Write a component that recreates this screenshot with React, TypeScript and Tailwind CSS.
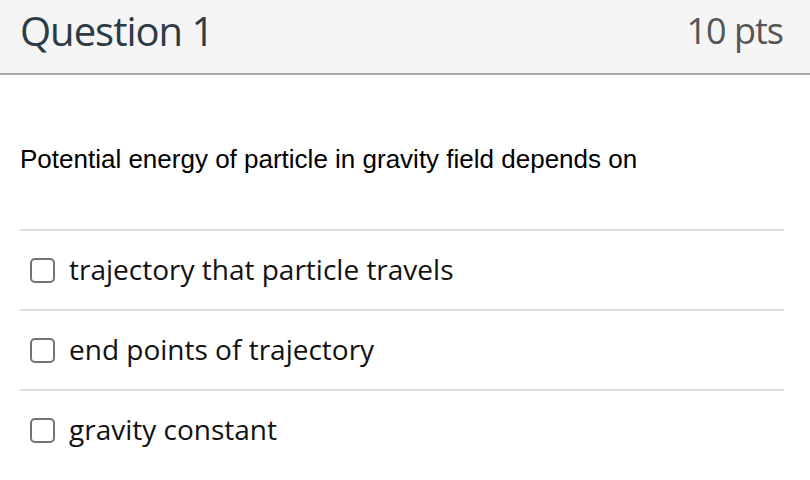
export default function App() {
  const options = [
    "trajectory that particle travels",
    "end points of trajectory",
    "gravity constant",
  ];

  return (
    <div className="w-[810px] h-[480px] bg-white overflow-hidden">
      {/* Header */}
      <div className="h-[75px] bg-[#f5f5f5] border-b-2 border-[#a8a8a8] flex items-center justify-between pl-[20px] pr-[27px] pb-[12px] font-['Open_Sans',sans-serif]">
        <h2 className="text-[40px] text-[#2d3b45] tracking-[-1px]">Question 1</h2>
        <span className="text-[36px] text-[#555] tracking-[-1px]">10 pts</span>
      </div>

      <div className="px-[20px] pr-[26px]">
        <p className="pt-[68px] pb-[54px] text-[26px] leading-[32px] text-black font-['Liberation_Sans',Arial,sans-serif]">
          Potential energy of particle in gravity field depends on
        </p>

        {options.map((opt) => (
          <label
            key={opt}
            className="h-[80px] border-t-2 border-[#dddddd] flex items-center gap-[14px] pl-[10px] font-['Open_Sans',sans-serif] cursor-pointer"
          >
            <span className="w-[25px] h-[25px] rounded-[5px] border-2 border-[#737373] bg-white shrink-0" />
            <span className="text-[28px] leading-[36px] text-[#111] pb-[3px]">{opt}</span>
          </label>
        ))}
      </div>
    </div>
  );
}
